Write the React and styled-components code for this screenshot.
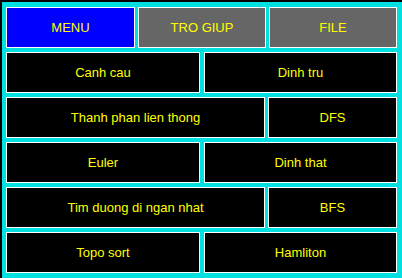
import React from 'react';
import styled, { createGlobalStyle } from 'styled-components';

const GlobalStyle = createGlobalStyle`
    html, body {
        margin: 0;
        padding: 0;
        background: #00e0e0;
    }
`;

const rows = [
    { split: 'thirds', items: [{ text: 'MENU', tone: 'blue' }, { text: 'TRO GIUP', tone: 'gray' }, { text: 'FILE', tone: 'gray' }] },
    { split: 'half', items: [{ text: 'Canh cau' }, { text: 'Dinh tru' }] },
    { split: 'wide', items: [{ text: 'Thanh phan lien thong' }, { text: 'DFS' }] },
    { split: 'half', items: [{ text: 'Euler' }, { text: 'Dinh that' }] },
    { split: 'wide', items: [{ text: 'Tim duong di ngan nhat' }, { text: 'BFS' }] },
    { split: 'half', items: [{ text: 'Topo sort' }, { text: 'Hamliton' }] },
];

const columns = {
    thirds: '129px 128px 128px',
    half: '194px 193px',
    wide: '259px 129px',
};

const gaps = {
    thirds: '3px',
    half: '4px',
    wide: '3px',
};

const tones = {
    blue: '#0000ff',
    gray: '#666666',
    black: '#000000',
};

const App = () => {
    return (
        <>
            <GlobalStyle />
            <Window>
                {rows.map((row, i) => (
                    <Row key={i} $split={row.split}>
                        {row.items.map((item) => (
                            <Button key={item.text} $tone={item.tone || 'black'}>
                                {item.text}
                            </Button>
                        ))}
                    </Row>
                ))}
            </Window>
        </>
    );
};

const Window = styled.div`
    width: 402px;
    height: 278px;
    box-sizing: border-box;
    background: #00e0e0;
    border-top: 2px solid #000;
    border-left: 2px solid #000;
    padding: 5px 5px 5px 4px;
    display: flex;
    flex-direction: column;
    gap: 4px;
`;

const Row = styled.div`
    display: grid;
    grid-template-columns: ${({ $split }) => columns[$split]};
    column-gap: ${({ $split }) => gaps[$split]};
    height: 41px;
`;

const Button = styled.div`
    box-sizing: border-box;
    border: 1px solid #ffffff;
    background: ${({ $tone }) => tones[$tone]};
    color: #ffff00;
    font-family: 'Liberation Sans', Arial, sans-serif;
    font-size: 13px;
    display: flex;
    align-items: center;
    justify-content: center;
    white-space: nowrap;
`;

export default App;
